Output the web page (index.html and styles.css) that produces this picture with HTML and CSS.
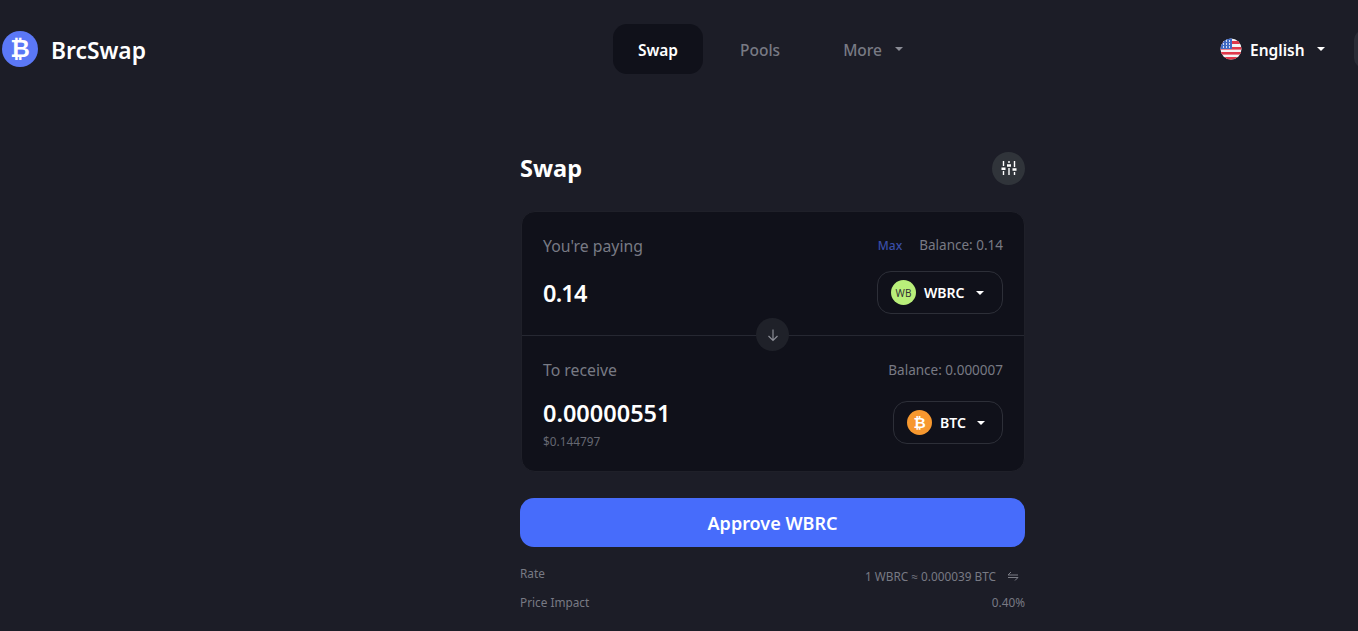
FILE: index.html
```html
<!DOCTYPE html>
<html lang="en">
<head>
<meta charset="utf-8">
<title>BrcSwap</title>
<link rel="stylesheet" href="styles.css">
</head>
<body>
<header class="header">
  <a class="brand">
    <svg class="brand-logo" viewBox="0 0 36 36"><circle cx="18" cy="18" r="18" fill="#5b78f6"/><text x="18" y="26" text-anchor="middle" class="btc-glyph" font-size="24" fill="#fff">₿</text></svg>
    <span class="brand-name">BrcSwap</span>
  </a>
  <nav class="nav">
    <a class="nav-item active">Swap</a>
    <a class="nav-item pools">Pools</a>
    <a class="nav-item more">More<span class="caret caret-grey"></span></a>
  </nav>
  <div class="lang">
    <svg class="flag" viewBox="0 0 22 22">
      <defs><clipPath id="fc"><circle cx="11" cy="11" r="10.5"/></clipPath></defs>
      <g clip-path="url(#fc)">
        <rect width="22" height="22" fill="#f4f4f4"/>
        <rect y="3" width="22" height="3" fill="#e0394a"/>
        <rect y="9" width="22" height="2.6" fill="#e0394a"/>
        <rect y="14" width="22" height="2.6" fill="#e0394a"/>
        <rect y="19" width="22" height="3" fill="#e0394a"/>
        <rect width="12" height="11" fill="#3f6ac4"/>
        <path d="M3 3h1M6 3h1M9 3h1M3 6h1M6 6h1M9 6h1M6 9h1M9 9h1M3 9h1" stroke="#fff" stroke-width="1.4"/>
      </g>
    </svg>
    <span class="lang-name">English</span>
    <span class="caret caret-white"></span>
  </div>
  <div class="wallet-stub"></div>
</header>
<main class="swap">
  <div class="swap-head">
    <h1 class="swap-title">Swap</h1>
    <button class="settings" aria-label="Settings">
      <svg viewBox="0 0 16 16" width="16" height="16" fill="none" stroke="#fff" stroke-width="1.4"><path d="M2.500 1v5M2.500 11v4M8 1v2M8 8v7M13.500 1v6M13.500 12v3"/><path d="M.5 8.800h4M6 5.500h4M11.500 9.500h4" stroke-width="2.400"/></svg>
    </button>
  </div>
  <section class="card">
    <div class="panel pay">
      <div class="row">
        <span class="label">You're paying</span>
        <span class="balance"><span class="max">Max</span>Balance: 0.14</span>
      </div>
      <div class="row row-amount">
        <span class="amount">0.14</span>
        <button class="token token-wbrc"><span class="token-icon wb">WB</span><span class="token-name">WBRC</span><span class="caret caret-white"></span></button>
      </div>
    </div>
    <div class="divider">
      <span class="flip"><svg viewBox="0 0 16 16" width="16" height="16" fill="none" stroke="#8b8d96" stroke-width="1.2"><path d="M8 2.500v11M3.500 9 8 13.500 12.500 9"/></svg></span>
    </div>
    <div class="panel receive">
      <div class="row">
        <span class="label">To receive</span>
        <span class="balance">Balance: 0.000007</span>
      </div>
      <div class="row row-amount2">
        <div>
          <div class="amount">0.00000551</div>
          <div class="usd">$0.144797</div>
        </div>
        <button class="token token-btc"><span class="token-icon btc">₿</span><span class="token-name">BTC</span><span class="caret caret-white"></span></button>
      </div>
    </div>
  </section>
  <button class="approve">Approve WBRC</button>
  <div class="info info-rate">
    <span>Rate</span>
    <span class="rate-val">1 WBRC ≈ 0.000039 BTC<svg class="swap-arrows" viewBox="0 0 12 10" width="12" height="10" fill="none" stroke="#7b7d86" stroke-width="1"><path d="M11 4H1l3-3M1 6.500h10l-3 3"/></svg></span>
  </div>
  <div class="info info-impact">
    <span>Price Impact</span>
    <span>0.40%</span>
  </div>
</main>
</body>
</html>
```

FILE: styles.css
```css
* { box-sizing: border-box; }
html, body { height: 100%; }
body {
  margin: 0;
  background: #1c1d27;
  color: #fff;
  font-family: "Noto Sans", "Open Sans", sans-serif;
  overflow: hidden;
}
.header {
  display: flex;
  align-items: center;
  height: 98px;
  padding-left: 2px;
  width: 1400px;
}
.brand { display: flex; align-items: center; gap: 13px; width: 611px; }
.brand-logo { width: 36px; height: 36px; flex: none; }
.btc-glyph { font-family: "DejaVu Sans", sans-serif; font-weight: 700; }
.brand-name { font-size: 22.8px; font-weight: 600; padding-top: 2px; }
.nav { display: flex; align-items: center; font-size: 15.5px; font-weight: 500; width: 607px; }
.nav-item { color: #787a84; display: flex; align-items: center; padding-top: 2px; }
.nav-item.active {
  background: #10111a;
  color: #fff;
  font-weight: 600;
  border-radius: 14px;
  width: 90px;
  height: 50px;
  justify-content: center;
}
.pools { margin-left: 37px; }
.more { margin-left: 63px; }
.caret {
  display: inline-block;
  width: 0;
  height: 0;
  border-left: 4px solid transparent;
  border-right: 4px solid transparent;
  border-top: 4px solid #fff;
}
.caret-grey { border-top-color: #8a8c95; margin-left: 13px; margin-top: -3px; }
.lang { display: flex; align-items: center; width: 134px; }
.flag { width: 22px; height: 22px; flex: none; }
.lang-name { font-size: 15.5px; font-weight: 600; margin-left: 8px; margin-right: 12px; padding-top: 2px; }
.caret-white { flex: none; }
.wallet-stub { width: 40px; height: 38px; border-radius: 10px; background: #2a2c36; }

.swap { margin-left: 520px; width: 505px; padding-top: 52px; }
.swap-head { display: flex; justify-content: space-between; align-items: center; height: 36px; }
.swap-title { margin: 0; font-size: 23.5px; font-weight: 700; line-height: 36px; }
.settings {
  width: 33px;
  height: 33px;
  border: 0;
  padding: 0;
  border-radius: 50%;
  background: #30343a;
  display: flex;
  align-items: center;
  justify-content: center;
}
.card {
  margin: 25px 0 0 1px;
  height: 261px;
  background: #10111a;
  border: 1px solid #1f2029;
  border-radius: 14px;
  display: flex;
  flex-direction: column;
}
.panel { padding: 0 21px; }
.pay { height: 123px; padding-top: 22px; }
.receive { padding-top: 22px; }
.row { display: flex; justify-content: space-between; align-items: center; height: 24px; }
.label { font-size: 15.8px; color: #787a84; }
.balance { font-size: 13.5px; color: #787a84; margin-top: -2px; }
.receive .balance { margin-top: 0; }
.max { font-size: 12px; color: #3a4ea8; font-weight: 500; margin-right: 17px; }
.row-amount { margin-top: 13px; height: 43px; }
.row-amount2 { margin-top: 13px; height: 60px; align-items: flex-start; }
.row-amount2 .token { margin-top: 6px; }
.amount { font-size: 23.5px; font-weight: 600; line-height: 34px; }
.pay .amount { letter-spacing: -0.8px; }
.receive .amount { margin-top: 1px; }
.usd { font-size: 11.8px; color: #666872; line-height: 18px; margin-top: 2px; }
.divider { height: 1px; background: #262832; position: relative; flex: none; }
.flip {
  position: absolute;
  left: 234px;
  top: -17px;
  width: 33px;
  height: 33px;
  border-radius: 50%;
  background: #1f2129;
  display: flex;
  align-items: center;
  justify-content: center;
}
.token {
  display: flex;
  align-items: center;
  height: 43px;
  border-radius: 14px;
  border: 1px solid #2d2f38;
  background: transparent;
  color: #fff;
  padding: 0 0 0 13px;
  font-family: inherit;
}
.token-wbrc { width: 126px; }
.token-btc { width: 110px; }
.token-icon {
  width: 25px;
  height: 25px;
  border-radius: 50%;
  display: flex;
  align-items: center;
  justify-content: center;
  flex: none;
}
.wb { background: #b9ef7a; color: #333; font-size: 10px; }
.btc { background: #f7982f; color: #fff; font-size: 15px; font-weight: 700; font-family: "DejaVu Sans", sans-serif; }
.token-name { font-size: 14px; font-weight: 600; margin-left: 8px; margin-right: 11px; }
.approve {
  display: block;
  width: 100%;
  margin-top: 26px;
  height: 49px;
  border: 0;
  border-radius: 14px;
  background: #476cfb;
  color: #fff;
  font-family: inherit;
  font-size: 18px;
  font-weight: 600;
}
.info {
  display: flex;
  justify-content: space-between;
  font-size: 11.8px;
  color: #787a84;
  line-height: 18px;
}
.info-rate { margin-top: 17px; align-items: flex-start; height: 20px; }
.info-rate .rate-val { margin-top: 3px; display: flex; align-items: center; padding-right: 6px; }
.swap-arrows { margin-left: 11px; }
.info-impact { margin-top: 9px; }
```
